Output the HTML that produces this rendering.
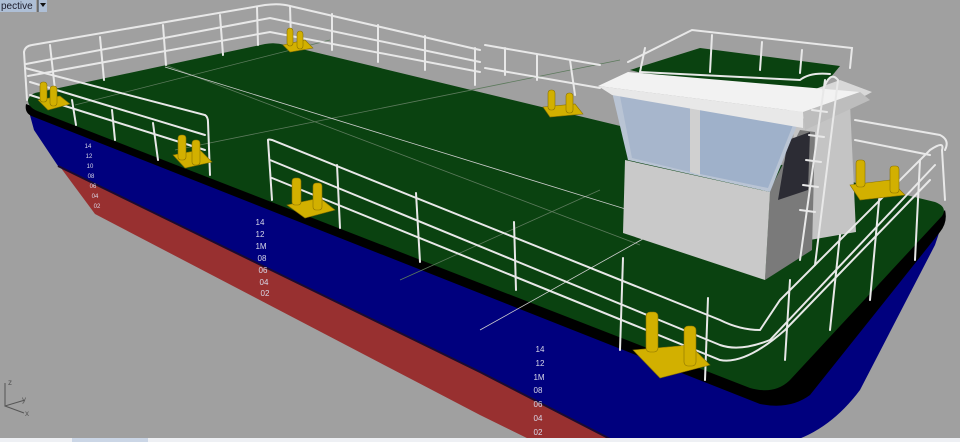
<!DOCTYPE html>
<html><head><meta charset="utf-8"><style>
html,body{margin:0;padding:0;width:960px;height:442px;overflow:hidden;background:#a0a0a0;}
svg{display:block}
</style></head><body>
<svg width="960" height="442" viewBox="0 0 960 442" xmlns="http://www.w3.org/2000/svg" font-family="Liberation Sans, sans-serif">
<rect width="960" height="442" fill="#a0a0a0"/>
<rect x="0" y="0" width="36" height="12" fill="#aebfd6"/>
<text x="1" y="9" font-size="10" fill="#1a1a2a">pective</text>
<rect x="38" y="0" width="9" height="12" fill="#aebfd6"/>
<line x1="38" y1="0" x2="38" y2="12" stroke="#333" stroke-width="1"/>
<path d="M40 3 L46 3 L43 7 Z" fill="#111"/>
<!-- red bottom -->
<path d="M55 160 L95 214 L480 415 L535 442 L640 442 L640 420 L480 372 Z" fill="#983030"/>
<!-- blue hull -->
<path d="M28 108 L34 130 L58 166 L480 372 L616 442 L790 442 Q830 430 860 390 L935 245 L945 215 L770 392 Z" fill="#00007e"/>
<path d="M58 166 L480 372 L616 442" stroke="#1a0a30" stroke-width="2" fill="none"/>
<!-- fender -->
<path d="M26 104 Q24 114 34 117 L760 404 Q790 410 810 395 L940 232 Q948 222 945 210 L770 388 Z" fill="#000"/>
<!-- deck -->
<path d="M28 100 Q30 93 40 92 L265 44 Q275 42 285 45 L935 202 Q948 207 942 216 L790 380 Q775 395 750 388 L40 112 Q28 108 28 100 Z" fill="#0a4210"/>
<g stroke="#5c7a5c" stroke-width="0.8" fill="none">
<path d="M165 65 L640 245"/><path d="M75 105 L330 40"/><path d="M175 150 L620 60"/><path d="M400 280 L600 190"/>
</g>
<g stroke="#cfcfcf" stroke-width="0.8" fill="none"><path d="M165 67 L700 232"/><path d="M480 330 L650 235"/></g>
<path d="M630 70 L700 48 L840 66 L812 100 L800 112 Z" fill="#0a4210"/>
<path d="M793 122 L850 104 L856 232 L798 242 Z" fill="#c4c4c4"/>
<path d="M785 100 L840 80 L872 92 L850 104 L793 122 Z" fill="#d8d8d8"/>
<path d="M770 190 L800 130 L815 132 L812 250 L765 280 Z" fill="#7a7a7a"/>
<path d="M788 140 L810 132 L808 190 L778 200 Z" fill="#2c2c34"/>
<path d="M625 160 L770 192 L765 280 L623 233 Z" fill="#c9c9c9"/>
<path d="M612 92 L800 118 L770 192 L628 160 Z" fill="#b9c4d4"/>
<path d="M620 96 L690 106 L690 172 L632 158 Z" fill="#a7b6cc"/>
<path d="M700 107 L795 120 L768 188 L700 174 Z" fill="#9fb1ca"/>
<path d="M690 105 L700 107 L700 175 L690 172 Z" fill="#d0d0d0"/>
<path d="M598 86 L628 72 L860 92 L803 112 Z" fill="#f2f2f2"/>
<path d="M598 86 L803 112 L803 128 L612 95 Z" fill="#e8e8e8"/>
<path d="M803 112 L860 92 L870 100 L805 130 Z" fill="#bdbdbd"/>
<g stroke="#e8e8e8" stroke-width="2" fill="none" stroke-linecap="round">
<path d="M24 52 Q25 46 32 45 L265 5 Q280 3 290 6 L480 50"/>
<path d="M26 64 L270 18 L480 62"/>
<path d="M28 76 L270 32 L480 72"/>
<path d="M24 52 L27 100 M50 45 L55 90 M100 37 L104 80 M163 25 L166 65 M220 15 L223 55 M257 7 L258 45 M290 6 L291 40 M332 14 L332 50 M378 25 L378 62 M425 36 L425 70 M475 48 L475 85"/>
<path d="M25 68 L205 115 Q208 117 208 122 L210 175"/>
<path d="M30 82 L205 135"/>
<path d="M30 95 L205 150"/>
<path d="M72 100 L76 125 M112 110 L115 140 M153 123 L158 160"/>
<path d="M268 140 Q268 139 272 140 L720 320 Q740 330 760 330 L780 300 L930 150 Q945 140 942 150 L945 200"/>
<path d="M270 160 L720 345 Q740 352 770 340 L935 165"/>
<path d="M272 178 L720 360 Q745 365 785 330 L930 180"/>
<path d="M268 140 L272 200 M337 165 L340 228 M416 193 L420 262 M514 222 L516 290 M623 258 L620 350 M708 298 L705 380 M790 280 L785 360 M840 235 L830 330 M880 190 L870 300 M920 160 L915 260"/>
<path d="M485 45 L600 65 M485 68 L600 88 M505 48 L505 75 M537 55 L537 80 M570 60 L575 95"/>
<path d="M628 62 L692 30 L852 48 L850 68 M640 72 L645 48 M710 72 L712 35 M760 70 L762 42 M800 73 L802 50"/>
<path d="M640 72 L800 80 Q810 72 830 74"/>
<path d="M825 80 L800 260 M838 80 L815 265 M823 90 Q830 70 838 80"/>
<path d="M812 110 L827 112 M809 135 L824 137 M806 160 L821 162 M803 185 L818 187 M800 210 L815 212"/>
<path d="M855 120 L940 135 Q950 140 945 150 M855 140 L930 155"/>
</g>
<g fill="#d2b000" stroke="#8a7200" stroke-width="0.6">
<path d="M38 100 L60 96 L70 104 L48 110 Z"/><rect x="40" y="82" width="7" height="20" rx="3"/><rect x="50" y="86" width="7" height="20" rx="3"/>
<path d="M173 155 L200 150 L212 162 L185 168 Z"/><rect x="178" y="135" width="8" height="25" rx="3"/><rect x="192" y="140" width="8" height="25" rx="3"/>
<path d="M287 205 L320 198 L335 210 L305 218 Z"/><rect x="292" y="178" width="9" height="27" rx="3"/><rect x="313" y="183" width="9" height="27" rx="3"/>
<path d="M283 45 L305 40 L313 48 L290 52 Z"/><rect x="287" y="28" width="6" height="18" rx="3"/><rect x="297" y="31" width="6" height="18" rx="3"/>
<path d="M543 107 L575 104 L583 114 L550 117 Z"/><rect x="548" y="90" width="7" height="20" rx="3"/><rect x="566" y="93" width="7" height="20" rx="3"/>
<path d="M633 350 L690 345 L710 365 L660 378 Z"/><rect x="646" y="312" width="12" height="40" rx="4"/><rect x="684" y="326" width="12" height="40" rx="4"/>
<path d="M850 185 L890 180 L905 195 L860 200 Z"/><rect x="856" y="160" width="9" height="27" rx="3"/><rect x="890" y="166" width="9" height="27" rx="3"/>
</g>
<g fill="#d8d8e8" font-size="8" text-anchor="middle">
<text x="260" y="225">14</text><text x="260" y="237">12</text><text x="261" y="249">1M</text><text x="262" y="261">08</text><text x="263" y="273">06</text><text x="264" y="285">04</text><text x="265" y="296">02</text>
<text x="540" y="352">14</text><text x="540" y="366">12</text><text x="539" y="380">1M</text><text x="538" y="393">08</text><text x="538" y="407">06</text><text x="538" y="421">04</text><text x="538" y="435">02</text>
<text x="88" y="148" font-size="6">14</text><text x="89" y="158" font-size="6">12</text><text x="90" y="168" font-size="6">10</text><text x="91" y="178" font-size="6">08</text><text x="93" y="188" font-size="6">06</text><text x="95" y="198" font-size="6">04</text><text x="97" y="208" font-size="6">02</text>
</g>
<g stroke="#555" stroke-width="1" fill="none"><path d="M5 383 L5 406 L25 400 M5 406 L24 413"/></g>
<g fill="#555" font-size="8"><text x="8" y="385">z</text><text x="22" y="402">y</text><text x="25" y="416">x</text></g>
<rect x="0" y="438" width="960" height="4" fill="#eef0f4"/>
<rect x="72" y="438" width="38" height="4" fill="#cbd6e6"/><rect x="110" y="438" width="38" height="4" fill="#cbd6e6"/>
</svg>
</body></html>
